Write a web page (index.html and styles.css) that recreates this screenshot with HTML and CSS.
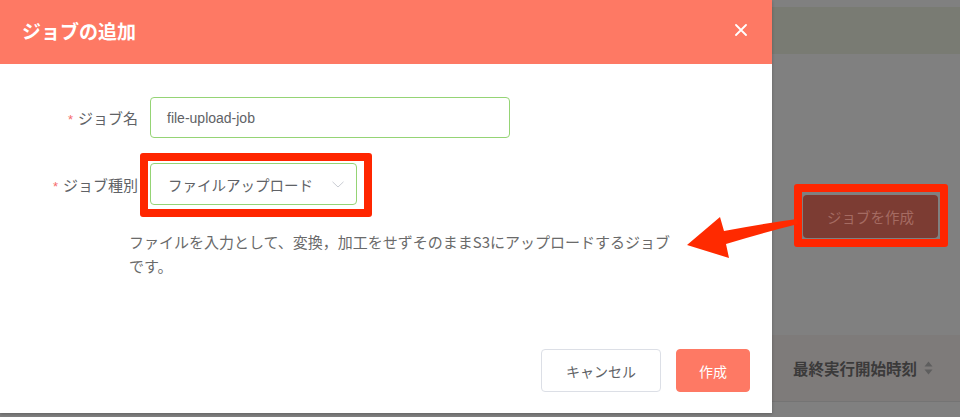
FILE: index.html
```html
<!DOCTYPE html>
<html lang="ja">
<head>
<meta charset="utf-8">
<title>ジョブの追加</title>
<link rel="stylesheet" href="styles.css">
</head>
<body>
<div class="page">
  <div class="band"></div>
  <div class="toolbar">
    <div class="hl-wrap">
      <button class="btn-job">ジョブを作成</button>
      <span class="hl hl-job"></span>
    </div>
  </div>
  <div class="table-head">
    <div class="th">最終実行開始時刻
      <svg class="sort" width="9" height="14" viewBox="0 0 9 14"><path d="M4.5 0.5 L8.5 5.5 L0.5 5.5 Z M4.5 13.5 L8.5 8.5 L0.5 8.5 Z" fill="#5e5e5e"/></svg>
    </div>
  </div>
</div>

<div class="modal">
  <div class="modal-header">
    <span class="modal-title">ジョブの追加</span>
    <svg class="close" width="12" height="12" viewBox="0 0 12 12"><path d="M1 1 L11 11 M11 1 L1 11" stroke="#fff" stroke-width="1.8" stroke-linecap="round"/></svg>
  </div>
  <div class="modal-body">
    <div class="form-row">
      <label class="form-label"><span class="req">*</span>ジョブ名</label>
      <div class="input">file-upload-job</div>
    </div>
    <div class="form-row row-type">
      <label class="form-label"><span class="req">*</span>ジョブ種別</label>
      <div class="hl-wrap">
        <div class="select">
          <span>ファイルアップロード</span>
          <svg class="chev" width="12" height="7" viewBox="0 0 12 7"><path d="M0.5 0.8 L6 6 L11.5 0.8" fill="none" stroke="#c9ccd3" stroke-width="1"/></svg>
        </div>
        <span class="hl hl-select"></span>
      </div>
    </div>
    <p class="desc">ファイルを入力として、変換，加工をせずそのままS3にアップロードするジョブです。</p>
  </div>
  <div class="modal-footer">
    <button class="btn btn-cancel">キャンセル</button>
    <button class="btn btn-primary">作成</button>
  </div>
</div>

<svg class="arrow" width="960" height="417" viewBox="0 0 960 417">
  <path d="M687 245 L720 217 L724 231 Q760 224 797 219 L798 224 Q762 233 726 244 L729 258 Z" fill="#ff2a00"/>
</svg>
</body>
</html>
```
FILE: styles.css
```css
* { box-sizing: border-box; }
html, body { margin: 0; padding: 0; }
body {
  width: 960px;
  height: 417px;
  overflow: hidden;
  position: relative;
  background: #808080;
  font-family: "Liberation Sans", "Noto Sans CJK JP", sans-serif;
  color: #606266;
}

/* underlying page (dimmed) */
.page { display: flex; flex-direction: column; }
.band { margin-top: 7px; height: 47px; background: #797b73; }
.toolbar { margin-top: 141px; display: flex; justify-content: flex-end; padding-right: 22px; }
.hl-wrap { position: relative; display: inline-flex; }
.btn-job {
  height: 43px;
  padding: 0 24px;
  border: none;
  border-radius: 4px;
  background: #7c3c33;
  color: #a56b62;
  font-family: "Noto Sans CJK JP", sans-serif;
  font-size: 14.5px;
}
.hl {
  position: absolute;
  border: 8px solid #ff2600;
  border-radius: 3px;
  pointer-events: none;
}
.hl-job { left: -9px; top: -11px; right: -10px; bottom: -9px; }
.table-head {
  margin-top: 97px;
  height: 67px;
  background: #7e7b7a;
  border-bottom: 1px solid #747474;
  display: flex;
  justify-content: flex-end;
  align-items: center;
  padding-right: 27px;
}
.th {
  display: flex;
  align-items: center;
  gap: 7px;
  font-family: "Noto Sans CJK JP", sans-serif;
  font-weight: 700;
  font-size: 15.5px;
  color: #3b3a3a;
}

/* modal */
.modal {
  position: absolute;
  left: 0;
  top: 0;
  width: 772px;
  height: 413px;
  background: #fff;
  display: flex;
  flex-direction: column;
  box-shadow: 0 1px 3px rgba(0,0,0,0.25);
}
.modal-header {
  height: 64px;
  background: #fe7964;
  display: flex;
  align-items: center;
  justify-content: space-between;
  padding: 0 25px 4px 22px;
}
.modal-title {
  font-family: "Noto Sans CJK JP", sans-serif;
  font-weight: 700;
  font-size: 19px;
  color: #fff;
}
.modal-body { padding-top: 33px; }
.form-row { display: flex; align-items: center; }
.row-type { margin-top: 25px; }
.form-label {
  width: 138px;
  margin-right: 12px;
  text-align: right;
  font-family: "Noto Sans CJK JP", sans-serif;
  font-size: 15px;
  color: #606266;
}
.req { color: #f56c6c; font-family: "Liberation Sans", sans-serif; font-size: 13px; margin-right: 5px; }
.input {
  width: 360px;
  height: 41px;
  border: 1px solid #95d475;
  border-radius: 4px;
  padding-left: 16px;
  display: flex;
  align-items: center;
  font-size: 14px;
  color: #606266;
}
.select {
  width: 207px;
  height: 42px;
  border: 1px solid #95d475;
  border-radius: 4px;
  padding: 0 12px 0 17px;
  display: flex;
  align-items: center;
  justify-content: space-between;
  font-family: "Noto Sans CJK JP", sans-serif;
  font-size: 14.5px;
  color: #606266;
}
.chev { margin-top: 1px; }
.hl-select { left: -10px; top: -10px; right: -15px; bottom: -12px; }
.desc {
  margin: 25px 0 0 129px;
  width: 548px;
  font-family: "Noto Sans CJK JP", sans-serif;
  font-size: 15px;
  line-height: 24px;
  color: #6a6a6a;
}
.modal-footer {
  margin-top: auto;
  display: flex;
  justify-content: flex-end;
  gap: 15px;
  padding: 0 22px 21px 0;
}
.btn {
  height: 43px;
  border-radius: 4px;
  font-family: "Noto Sans CJK JP", sans-serif;
  font-size: 14px;
}
.btn-cancel {
  padding: 0 24px;
  background: #fff;
  border: 1px solid #dcdfe6;
  color: #606266;
}
.btn-primary {
  padding: 0 22px;
  background: #fe7964;
  border: 1px solid #fe7964;
  color: #fff;
}

/* annotation arrow */
.arrow { position: absolute; left: 0; top: 0; pointer-events: none; }
```
